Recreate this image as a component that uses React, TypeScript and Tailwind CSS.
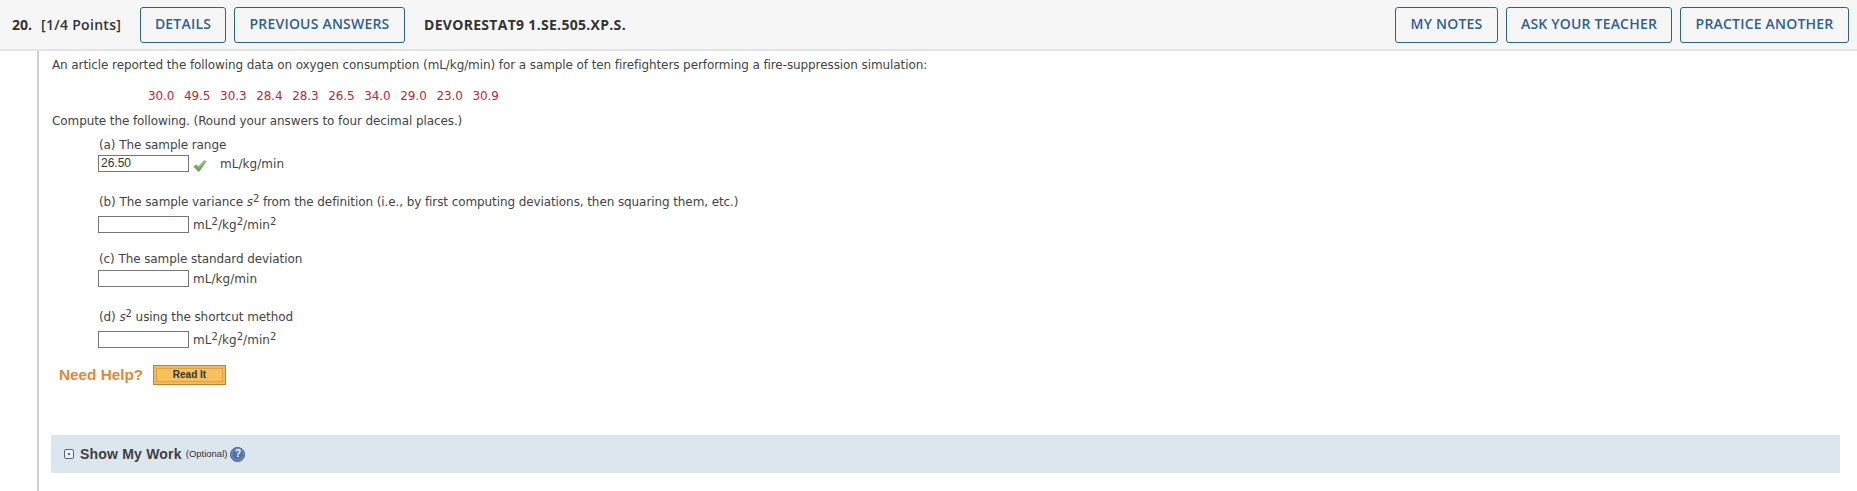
const BODY = "font-['DejaVu_Sans',sans-serif]";

function HeaderButton({ children, width }: { children: string; width: string }) {
  return (
    <button className={`h-[36px] rounded-[3px] border border-[#2a6496] bg-[#f6f6f6] pb-[2px] text-center text-[14px] font-semibold tracking-[0.2px] text-[#2f5f96] font-['Open_Sans',sans-serif] ${width}`}>
      {children}
    </button>
  );
}

function Sup() {
  return <sup className="top-0 text-[10px] leading-none align-[4px]">2</sup>;
}

function Unit2() {
  return (
    <span>
      mL<Sup />/kg<Sup />/min<Sup />
    </span>
  );
}

function Question({ label, unit, value, check, className, rowClass }: { label: React.ReactNode; unit: React.ReactNode; value?: string; check?: boolean; className: string; rowClass: string }) {
  return (
    <div className={className}>
      <div className="h-[17px] pl-[1px] leading-[17px]">{label}</div>
      <div className={`flex h-[17px] items-center ${rowClass}`}>
        <div className="h-[17px] w-[91px] border border-[#767676] bg-white pl-[2px] text-[12px] leading-[15px] tracking-normal text-[#333] font-['Liberation_Sans',sans-serif]">
          {value}
        </div>
        {check && (
          <svg className="ml-[4px] mr-[13px] mt-[4px] h-[14px] w-[14px]" viewBox="0 0 14 14">
            <path d="M0.5 7.5 L3 5.5 L5.5 7.5 L11 1.5 Q12.5 1.5 13.5 2.5 L6.5 12.5 L5 12.5 Z" fill="#70a862" />
            <path d="M3 5.5 L5.5 7.5 L11 1.5 Q12.5 1.5 13.5 2.5 L5.5 9 Z" fill="#8fc07f" />
          </svg>
        )}
        <span className={`tracking-[0.05px] ${check ? "" : "ml-[4px]"}`}>{unit}</span>
      </div>
    </div>
  );
}

const DATA = ["30.0", "49.5", "30.3", "28.4", "28.3", "26.5", "34.0", "29.0", "23.0", "30.9"];

export default function App() {
  return (
    <div className="h-[491px] w-[1857px] overflow-hidden bg-white">
      <header className="flex h-[51px] items-center justify-between border-b-2 border-[#e4e4e4] bg-[#f6f6f6] pl-[12px] pr-[8px]">
        <div className="flex items-center">
          <span className="w-[29px] text-[14px] font-bold text-[#333] font-['Open_Sans',sans-serif]">20.</span>
          <span className="w-[99px] text-[14px] font-semibold tracking-[0.3px] text-[#333] font-['Open_Sans',sans-serif]">[1/4 Points]</span>
          <div className="flex gap-[8px]">
            <HeaderButton width="w-[86px]">DETAILS</HeaderButton>
            <HeaderButton width="w-[171px]">PREVIOUS ANSWERS</HeaderButton>
          </div>
          <span className="ml-[19px] text-[14px] font-bold tracking-[0.3px] text-[#333] font-['Open_Sans',sans-serif]">DEVORESTAT9 1.SE.505.XP.S.</span>
        </div>
        <div className="flex gap-[8px]">
          <HeaderButton width="w-[103px]">MY NOTES</HeaderButton>
          <HeaderButton width="w-[166px]">ASK YOUR TEACHER</HeaderButton>
          <HeaderButton width="w-[169px]">PRACTICE ANOTHER</HeaderButton>
        </div>
      </header>
      <main className={`ml-[37px] h-[440px] border-l-2 border-[#d0d0d0] pl-[12px] pr-[17px] text-[12px] tracking-[-0.09px] text-[#444] ${BODY}`}>
        <p className="pt-[6px] leading-[17px] pl-[1px]">
          An article reported the following data on oxygen consumption (mL/kg/min) for a sample of ten firefighters performing a fire-suppression simulation:
        </p>
        <p className="ml-[97px] mt-[14px] flex gap-[9.7px] leading-[17px] text-[#c4262e]">
          {DATA.map((d, i) => (
            <span key={i}>{d}</span>
          ))}
        </p>
        <p className="mt-[8px] pl-[1px] leading-[17px]">Compute the following. (Round your answers to four decimal places.)</p>
        <div className="ml-[47px]">
          <Question className="mt-[7px]" rowClass="mt-[1px]" label="(a) The sample range" value="26.50" check unit="mL/kg/min" />
          <Question className="mt-[22px]" rowClass="mt-[5px]" label={<>(b) The sample variance <i>s</i><Sup /> from the definition (i.e., by first computing deviations, then squaring them, etc.)</>} unit={<Unit2 />} />
          <Question className="mt-[18px]" rowClass="mt-[2px]" label="(c) The sample standard deviation" unit="mL/kg/min" />
          <Question className="mt-[22px]" rowClass="mt-[5px]" label={<>(d) <i>s</i><Sup /> using the shortcut method</>} unit={<Unit2 />} />
        </div>
        <div className="ml-[8px] mt-[17px] flex h-[20px] items-center tracking-normal font-['Liberation_Sans',sans-serif]">
          <span className="w-[94px] text-[15.3px] font-bold text-[#e08a37]">Need Help?</span>
          <button className="h-[20px] w-[73px] border border-[#c2822f] bg-[#f3b95a] p-[2px]">
            <span className="flex h-full w-full items-center justify-center border border-[#dba248] bg-[#f6c05c] text-[10px] font-bold leading-none text-[#333]">
              Read It
            </span>
          </button>
        </div>
        <section className="mt-[50px] flex h-[38px] items-center bg-[#dce6ef] pl-[13px] tracking-normal font-['Liberation_Sans',sans-serif]">
          <span className="flex h-[10px] w-[10px] items-center justify-center rounded-[2px] border border-[#4a6a94] bg-[#eef3f8]">
            <span className="h-[2px] w-[2px] bg-[#4a6a94]" />
          </span>
          <span className="ml-[6px] text-[14px] font-bold tracking-[0.2px] text-[#3f3f3f]">Show My Work</span>
          <span className="ml-[4px] text-[9.5px] text-[#333]">(Optional)</span>
          <span className="ml-[3px] flex h-[15px] w-[15px] items-center justify-center rounded-full border border-[#34548c] bg-[radial-gradient(circle,#4f72ad_50%,#86a3cf_75%,#3f5f98_100%)] text-[10px] font-bold leading-none text-white">?</span>
        </section>
      </main>
    </div>
  );
}
